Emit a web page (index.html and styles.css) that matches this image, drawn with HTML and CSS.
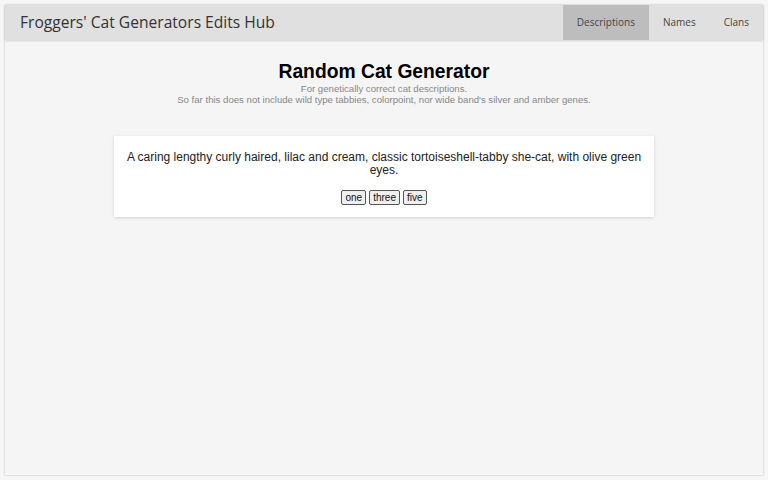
FILE: index.html
```html
<!DOCTYPE html>
<html lang="en">
<head>
    <meta charset="UTF-8">
    <title>Froggers' Cat Generators Edits Hub</title>
    <link rel="stylesheet" href="styles.css">
</head>
<body>
<div class="page">
    <div class="topBar">
        <span class="hubTitle">Froggers' Cat Generators Edits Hub</span>
        <div class="tabs">
            <a class="tab active" href="#">Descriptions</a>
            <a class="tab" href="#">Names</a>
            <a class="tab" href="#">Clans</a>
        </div>
    </div>

    <div class="main">
        <h1 class="genTitle">Random Cat Generator</h1>
        <div class="genNote">For genetically correct cat descriptions.</div>
        <div class="genNote">So far this does not include wild type tabbies, colorpoint, nor wide band's silver and amber genes.</div>

        <div class="catCard">
            <p id="catText">A caring lengthy curly haired, lilac and cream, classic tortoiseshell-tabby she-cat, with olive green eyes.</p>
            <div class="btnRow">
                <button onclick="makeCats(1)">one</button>
                <button onclick="makeCats(3)">three</button>
                <button onclick="makeCats(5)">five</button>
            </div>
        </div>
    </div>
</div>

<script>
    function makeCats(n) {
        // 生成功能尚未接入，先保留按钮
        console.log(n);
    }
</script>
</body>
</html>
```

FILE: styles.css
```css
html, body {
    margin: 0;
    padding: 0;
    background: #f6f6f6;
}

.page {
    margin: 5px;
    height: 470px;
    background: #f5f5f5;
    box-shadow: 0 0 2px rgba(0, 0, 0, 0.25);
    display: flex;
    flex-direction: column;
}

.topBar {
    height: 35px;
    background: #e0e0e0;
    display: flex;
    align-items: stretch;
    justify-content: space-between;
    box-shadow: 0 1px 2px rgba(0, 0, 0, 0.15);
}

.hubTitle {
    font-family: "Open Sans", sans-serif;
    font-size: 15.6px;
    color: #333;
    padding-left: 15px;
    line-height: 35px;
}

.tabs {
    display: flex;
}

.tab {
    font-family: "Open Sans", sans-serif;
    font-size: 10px;
    color: #444;
    text-decoration: none;
    padding: 0 14px;
    line-height: 35px;
}

.tab.active {
    background: #bdbdbd;
}

.main {
    padding-top: 20px;
    text-align: center;
    font-family: "Liberation Sans", Arial, sans-serif;
}

.genTitle {
    font-size: 19.3px;
    font-weight: bold;
    color: #000;
    margin: 0;
    line-height: 24px;
}

.genNote {
    font-size: 9.6px;
    color: #888;
    line-height: 10.5px;
}

.catCard {
    width: 540px;
    margin: 31px auto 0;
    background: #fff;
    box-shadow: 0 1px 3px rgba(0, 0, 0, 0.15);
    padding: 15px 0 12px;
}

.catCard p {
    margin: 0 10px 13px;
    font-size: 12px;
    line-height: 13px;
    color: #222;
}

.btnRow {
    display: flex;
    justify-content: center;
    gap: 3px;
}

.btnRow button {
    font-family: "Liberation Sans", Arial, sans-serif;
    font-size: 10px;
    padding: 1px 3px;
    background: #efefef;
    border: 1px solid #555;
    border-radius: 2px;
    color: #111;
}
```
